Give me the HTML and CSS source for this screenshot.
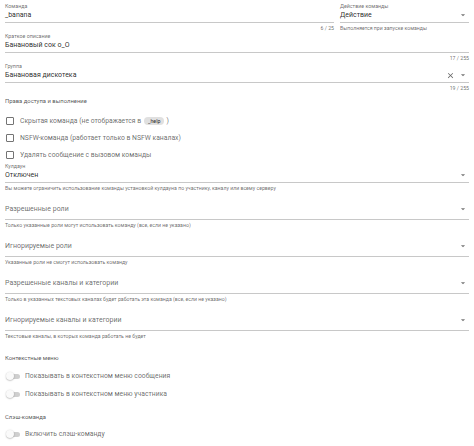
FILE: index.html
```html
<!DOCTYPE html>
<html lang="ru">
<head>
<meta charset="utf-8">
<link rel="stylesheet" href="styles.css">
</head>
<body>
<div class="page">
  <div class="row2">
    <div class="field">
      <div class="control">
        <div class="label">Команда</div>
        <div class="input"><span class="value">_banana</span></div>
      </div>
      <div class="details"><span></span><span>6 / 25</span></div>
    </div>
    <div class="field">
      <div class="control">
        <div class="label">Действие команды</div>
        <div class="input"><span class="value">Действие</span>
          <svg class="icon" viewBox="0 0 24 24"><path d="M7 10L12 15L17 10H7Z"/></svg>
        </div>
      </div>
      <div class="details"><span>Выполняется при запуске команды</span></div>
    </div>
  </div>

  <div class="field">
    <div class="control">
      <div class="label">Краткое описание</div>
      <div class="input"><span class="value">Банановый сок o_O</span></div>
    </div>
    <div class="details"><span></span><span>17 / 255</span></div>
  </div>

  <div class="field">
    <div class="control">
      <div class="label">Группа</div>
      <div class="input"><span class="value">Банановая дискотека</span>
        <svg class="icon close" viewBox="0 0 24 24"><path d="M19 6.41L17.59 5L12 10.59L6.41 5L5 6.41L10.59 12L5 17.59L6.41 19L12 13.41L17.59 19L19 17.59L13.41 12L19 6.41Z"/></svg>
        <svg class="icon" viewBox="0 0 24 24"><path d="M7 10L12 15L17 10H7Z"/></svg>
      </div>
    </div>
    <div class="details"><span></span><span>19 / 255</span></div>
  </div>

  <div class="section-title first">Права доступа и выполнение</div>

  <div class="checks">
    <div class="check"><span class="box"></span><span class="check-text">Скрытая команда (не отображается в <span class="chip">_help</span>)</span></div>
    <div class="check"><span class="box"></span><span class="check-text">NSFW-команда (работает только в NSFW каналах)</span></div>
    <div class="check"><span class="box"></span><span class="check-text">Удалять сообщение с вызовом команды</span></div>
  </div>

  <div class="field">
    <div class="control">
      <div class="label">Кулдаун</div>
      <div class="input"><span class="value">Отключен</span>
        <svg class="icon" viewBox="0 0 24 24"><path d="M7 10L12 15L17 10H7Z"/></svg>
      </div>
    </div>
    <div class="details"><span>Вы можете ограничить использование команды установкой кулдауна по участнику, каналу или всему серверу</span></div>
  </div>

  <div class="select">
    <div class="control plain">
      <div class="input"><span class="placeholder">Разрешенные роли</span>
        <svg class="icon" viewBox="0 0 24 24"><path d="M7 10L12 15L17 10H7Z"/></svg>
      </div>
    </div>
    <div class="details"><span>Только указанные роли могут использовать команду (все, если не указано)</span></div>
  </div>

  <div class="select">
    <div class="control plain">
      <div class="input"><span class="placeholder">Игнорируемые роли</span>
        <svg class="icon" viewBox="0 0 24 24"><path d="M7 10L12 15L17 10H7Z"/></svg>
      </div>
    </div>
    <div class="details"><span>Указанные роли не смогут использовать команду</span></div>
  </div>

  <div class="select">
    <div class="control plain">
      <div class="input"><span class="placeholder">Разрешенные каналы и категории</span>
        <svg class="icon" viewBox="0 0 24 24"><path d="M7 10L12 15L17 10H7Z"/></svg>
      </div>
    </div>
    <div class="details"><span>Только в указанных текстовых каналах будет работать эта команда (все, если не указано)</span></div>
  </div>

  <div class="select">
    <div class="control plain">
      <div class="input"><span class="placeholder">Игнорируемые каналы и категории</span>
        <svg class="icon" viewBox="0 0 24 24"><path d="M7 10L12 15L17 10H7Z"/></svg>
      </div>
    </div>
    <div class="details"><span>Текстовые каналы, в которых команда работать не будет</span></div>
  </div>

  <div class="section-title ctx">Контекстные меню</div>
  <div class="switches">
    <div class="switch-row"><span class="switch"><span class="thumb"></span></span><span class="switch-text">Показывать в контекстном меню сообщения</span></div>
    <div class="switch-row"><span class="switch"><span class="thumb"></span></span><span class="switch-text">Показывать в контекстном меню участника</span></div>
  </div>

  <div class="section-title slash">Слэш-команда</div>
  <div class="switches last">
    <div class="switch-row"><span class="switch"><span class="thumb"></span></span><span class="switch-text">Включить слэш-команду</span></div>
  </div>
</div>
</body>
</html>
```

FILE: styles.css
```css
html, body {
  margin: 0;
  padding: 0;
  background: #ffffff;
}

body {
  font-family: Roboto, "Noto Sans", Arial, sans-serif;
  color: rgba(0, 0, 0, 0.87);
}

.page {
  width: 464px;
  padding: 3px 5px 0 5px;
}

.row2 {
  display: grid;
  grid-template-columns: 329px 1fr;
  column-gap: 6px;
}

.control {
  border-bottom: 1px solid #c8c8c8;
  padding-bottom: 2px;
}

.control.plain {
  padding-top: 11px;
  padding-bottom: 5px;
}

.label {
  height: 6px;
  line-height: 6px;
  font-size: 5.3px;
  color: rgba(0, 0, 0, 0.6);
  margin-bottom: 1px;
  white-space: nowrap;
}

.input {
  height: 10px;
  display: flex;
  align-items: center;
  font-size: 7px;
  line-height: 10px;
}

.value {
  flex: 1;
  white-space: nowrap;
  color: rgba(0, 0, 0, 0.85);
}

.placeholder {
  flex: 1;
  white-space: nowrap;
  color: rgba(0, 0, 0, 0.6);
}

.icon {
  width: 10px;
  height: 10px;
  fill: rgba(0, 0, 0, 0.54);
  flex: none;
  margin-right: 1px;
}

.icon.close {
  width: 9px;
  height: 9px;
  margin-right: 3px;
  fill: rgba(0, 0, 0, 0.6);
}

.details {
  height: 10px;
  line-height: 10px;
  font-size: 5.2px;
  color: rgba(0, 0, 0, 0.6);
  display: flex;
  justify-content: space-between;
  white-space: nowrap;
}

.section-title {
  height: 8px;
  line-height: 8px;
  font-size: 5.9px;
  color: rgba(0, 0, 0, 0.7);
}

.section-title.first {
  margin-top: 4px;
}

.section-title.ctx {
  margin-top: 13px;
}

.section-title.slash {
  margin-top: 10px;
}

.checks {
  margin-top: 7px;
}

.check {
  height: 17px;
  display: flex;
  align-items: center;
}

.box {
  width: 8px;
  height: 8px;
  box-sizing: border-box;
  border: 1.2px solid rgba(0, 0, 0, 0.54);
  border-radius: 1px;
  margin-left: 1px;
  flex: none;
}

.check-text {
  margin-left: 6px;
  font-size: 6.8px;
  color: rgba(0, 0, 0, 0.6);
  white-space: nowrap;
  display: flex;
  align-items: center;
}

.chip {
  display: inline-flex;
  align-items: center;
  height: 8px;
  padding: 0 4px;
  margin: 0 2px 0 3px;
  border-radius: 4px;
  background: #e0e0e0;
  font-size: 5.3px;
  color: rgba(0, 0, 0, 0.87);
}

.switches {
  margin-top: 5px;
}

.switches.last {
  margin-top: 4px;
}

.switch-row {
  height: 18px;
  display: flex;
  align-items: center;
}

.switch {
  width: 13px;
  height: 5px;
  margin-left: 2px;
  border-radius: 3px;
  background: #cfcfcf;
  display: flex;
  align-items: center;
  flex: none;
}

.thumb {
  width: 8px;
  height: 8px;
  margin-left: -1px;
  border-radius: 50%;
  background: #fafafa;
  box-shadow: 0 0.5px 1.5px rgba(0, 0, 0, 0.35);
}

.switch-text {
  margin-left: 5px;
  font-size: 6.8px;
  color: rgba(0, 0, 0, 0.6);
  white-space: nowrap;
}
```
